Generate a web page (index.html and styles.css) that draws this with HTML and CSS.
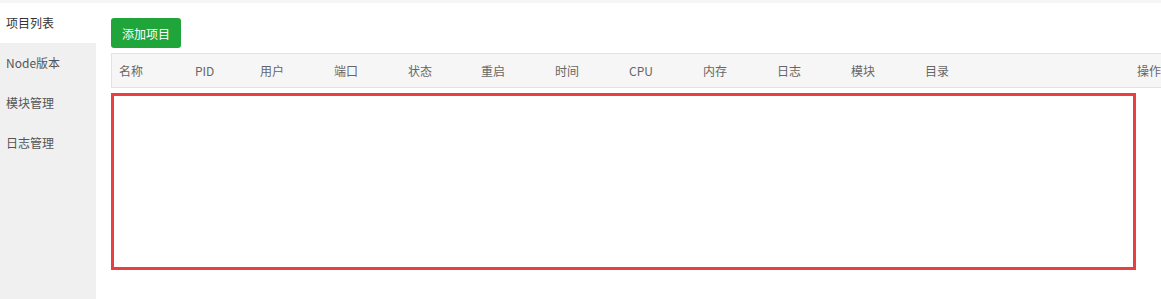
FILE: index.html
```html
<!DOCTYPE html>
<html lang="zh-CN">
<head>
<meta charset="UTF-8">
<meta name="viewport" content="width=device-width, initial-scale=1.0">
<title>项目列表</title>
<link rel="stylesheet" href="styles.css">
</head>
<body>

<div class="layout">
  <div class="sidebar">
    <div class="menu-item active">项目列表</div>
    <div class="menu-item">Node版本</div>
    <div class="menu-item">模块管理</div>
    <div class="menu-item">日志管理</div>
  </div>

  <div class="main">
    <button class="btn">添加项目</button>

    <div class="table-head">
      <span class="col col-name">名称</span>
      <span class="col col-pid">PID</span>
      <span class="col">用户</span>
      <span class="col">端口</span>
      <span class="col">状态</span>
      <span class="col">重启</span>
      <span class="col">时间</span>
      <span class="col">CPU</span>
      <span class="col">内存</span>
      <span class="col">日志</span>
      <span class="col">模块</span>
      <span class="col">目录</span>
      <span class="col col-ops">操作</span>
    </div>

    <div class="table-body"></div>
  </div>
</div>

</body>
</html>
```

FILE: styles.css
```css
body {
  font-family: "Noto Sans CJK SC", "Liberation Sans", sans-serif;
  font-size: 12px;
  margin: 0;
  padding: 0;
  background-color: #fff;
  border-top: 3px solid #f5f5f5;
  overflow: hidden;
}
.layout {
  display: flex;
  height: 296px;
}
.sidebar {
  width: 96px;
  flex-shrink: 0;
  background-color: #f0f0f0;
}
.menu-item {
  height: 40px;
  line-height: 40px;
  padding-left: 6px;
  color: #555;
}
.menu-item.active {
  background-color: #fff;
  color: #333;
}
.main {
  flex: 1;
  padding: 15px 0 0 15px;
  overflow: hidden;
}
.btn {
  display: block;
  height: 30px;
  padding: 0 11px;
  font-family: inherit;
  font-size: 12px;
  background-color: #20a53a;
  color: #fff;
  border: none;
  border-radius: 3px;
  cursor: pointer;
}
.table-head {
  display: grid;
  grid-template-columns: 75px 66px 74px 74px 73px repeat(7, 74px) 1fr;
  width: 1057px;
  height: 33px;
  line-height: 33px;
  margin-top: 5px;
  background-color: #f6f6f6;
  border: 1px solid #e3e3e3;
  color: #666;
}
.col {
  padding-left: 7px;
  white-space: nowrap;
}
.col-pid {
  padding-left: 8px;
}
.col-ops {
  text-align: right;
  padding-right: 8px;
}
.table-body {
  width: 1019px;
  height: 171px;
  margin-top: 5px;
  border: 3px solid #e84040;
}
```
